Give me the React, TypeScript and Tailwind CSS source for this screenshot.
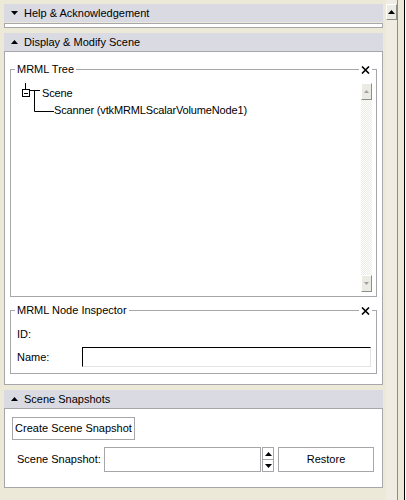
import React from "react";

const font = { fontFamily: '"Liberation Sans", Arial, sans-serif' };

function Tri({ up }: { up?: boolean }) {
  return (
    <svg width="7" height="4" viewBox="0 0 7 4" className="block">
      {up ? <polygon points="0,4 7,4 3.5,0" fill="#000" /> : <polygon points="0,0 7,0 3.5,4" fill="#000" />}
    </svg>
  );
}

function Header({ title, up }: { title: string; up?: boolean }) {
  return (
    <div className="h-[18px] bg-[#dadae3] flex items-center pl-[7px] text-[11px] text-black">
      <div className="w-[12px]"><Tri up={up} /></div>
      <span className="ml-[1px]">{title}</span>
    </div>
  );
}

function CloseX() {
  return (
    <svg width="9" height="8" viewBox="0 0 9 8" className="block">
      <path d="M1 0.5 L8 7.5 M8 0.5 L1 7.5" stroke="#000" strokeWidth="1.6" />
    </svg>
  );
}

function Group({ label, className, children }: { label: string; className: string; children: React.ReactNode }) {
  return (
    <div className={`relative border border-[#a7a6aa] ${className}`}>
      <span className="absolute -top-[8px] left-[4px] bg-white px-[2px] text-[11px] leading-[14px]">{label}</span>
      <span className="absolute -top-[4px] right-[4px] bg-white px-[2px]"><CloseX /></span>
      {children}
    </div>
  );
}

function SmallArrow({ up }: { up?: boolean }) {
  return (
    <svg width="5" height="3" viewBox="0 0 5 3" className="block">
      {up ? <polygon points="0,3 5,3 2.5,0" fill="#a0a0a0" /> : <polygon points="0,0 5,0 2.5,3" fill="#a0a0a0" />}
    </svg>
  );
}

function SbButton({ up }: { up?: boolean }) {
  return (
    <div className="h-[17px] bg-[#ecebe3] border border-t-white border-l-white border-r-[#8e8d86] border-b-[#8e8d86] flex items-center justify-center">
      <SmallArrow up={up} />
    </div>
  );
}

export default function App() {
  return (
    <div className="w-[406px] h-[500px] bg-[#ece9d8] flex overflow-hidden text-black" style={font}>
      <div className="w-[383px] pl-[4px] pt-[4px] flex flex-col">
        <Header title="Help & Acknowledgement" />
        <div className="h-[5px] mt-[1px] border border-[#a7a6aa] bg-white" />
        <div className="h-[5px]" />
        <Header title="Display & Modify Scene" up />
        <div className="h-[334px] border border-[#a7a6aa] bg-white px-[5px] pt-[17px]">
          <Group label="MRML Tree" className="h-[228px]">
            <div className="flex h-full pt-[13px] pb-[4px] pr-[4px]">
              <div className="relative flex-1 text-[11px] tracking-[-0.15px]">
                <svg width="34" height="32" viewBox="0 0 34 32" className="absolute left-[11px] top-0">
                  <path d="M3.5 0 V6" stroke="#000" />
                  <rect x="0.5" y="6.5" width="7" height="7" fill="none" stroke="#000" />
                  <path d="M2 10.5 H6" stroke="#000" />
                  <path d="M8 7.5 H18" stroke="#000" />
                  <path d="M12.5 7.5 V28.5 H32" stroke="#000" fill="none" />
                </svg>
                <div className="h-[18px] flex items-center ml-[31px] pt-[2px]">Scene</div>
                <div className="h-[18px] flex items-center ml-[43px]">Scanner (vtkMRMLScalarVolumeNode1)</div>
              </div>
              <div className="w-[11px] flex flex-col bg-[repeating-conic-gradient(#ecebe3_0_25%,#ffffff_0_50%)] bg-[length:2px_2px]">
                <SbButton up />
                <div className="flex-1" />
                <SbButton />
              </div>
            </div>
          </Group>
          <Group label="MRML Node Inspector" className="mt-[13px] h-[64px]">
            <div className="pl-[6px] pr-[5px] pt-[15px] text-[11px]">
              <div className="h-[16px] flex items-center">ID:</div>
              <div className="flex items-center mt-[5px]">
                <span className="w-[65px]">Name:</span>
                <div className="flex-1 h-[20px] bg-white border border-t-black border-l-black border-r-[#e3e3e3] border-b-[#e3e3e3]" />
              </div>
            </div>
          </Group>
        </div>
        <div className="h-[5px]" />
        <Header title="Scene Snapshots" up />
        <div className="h-[80px] border border-[#a7a6aa] bg-white pl-[7px] pt-[8px] text-[11px]">
          <div className="w-[123px] h-[23px] border border-[#a7a6aa] flex items-center justify-center">Create Scene Snapshot</div>
          <div className="flex items-center mt-[7px]">
            <span className="w-[92px] pl-[5px]">Scene Snapshot:</span>
            <div className="w-[157px] h-[25px] border border-[#a7a6aa] bg-white" />
            <div className="ml-[1px] w-[12px] flex flex-col">
              <div className="h-[13px] border border-[#a7a6aa] bg-white flex items-center justify-center"><Tri up /></div>
              <div className="h-[12px] border border-t-0 border-[#a7a6aa] bg-white flex items-center justify-center"><Tri /></div>
            </div>
            <div className="ml-[4px] w-[96px] h-[25px] border border-[#a7a6aa] flex items-center justify-center">Restore</div>
          </div>
        </div>
      </div>
      <div className="ml-[3px] w-[11px] bg-[#efede3] flex flex-col pt-[4px]">
        <div className="h-[16px] bg-[#ecebe3] border border-t-white border-l-white border-r-[#8e8d86] border-b-[#8e8d86] flex items-center justify-center">
          <Tri up />
        </div>
      </div>
      <div className="w-px bg-[#8e8d86]" />
      <div className="w-[6px] bg-[#ece9d8]" />
      <div className="w-px bg-black" />
      <div className="flex-1 bg-white" />
    </div>
  );
}
